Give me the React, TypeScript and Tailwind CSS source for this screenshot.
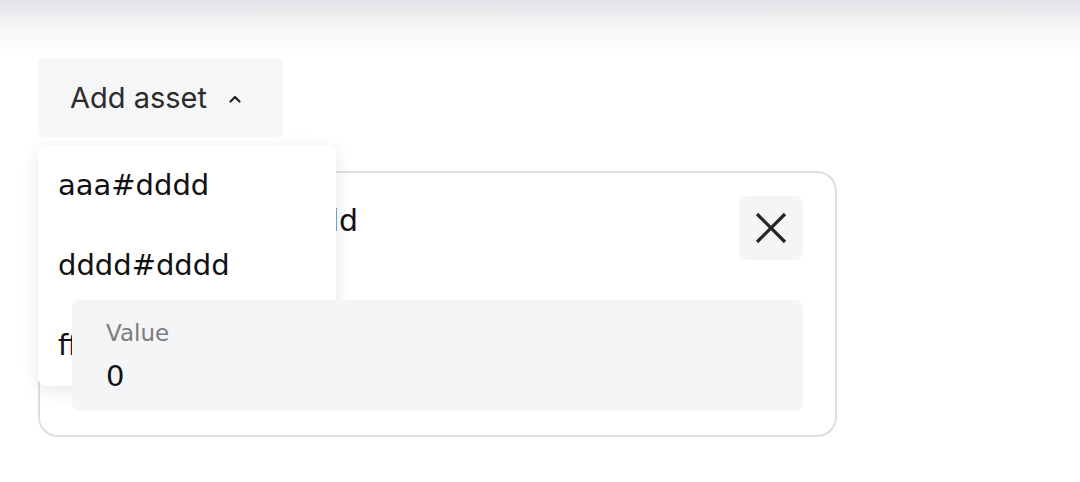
import { useState } from 'react';

const ASSETS = ['aaa#dddd', 'dddd#dddd', 'ffff#dddd'];

function ChevronUp() {
  return (
    <svg width="12" height="8" viewBox="0 0 12 8" fill="none" className="ml-[22px] mt-[2px]">
      <path d="M1.5 6.5L6 2l4.5 4.5" stroke="#222" strokeWidth="2.2" strokeLinecap="round" strokeLinejoin="round" />
    </svg>
  );
}

function CloseIcon() {
  return (
    <svg width="32" height="32" viewBox="0 0 32 32" fill="none">
      <path d="M2 2l28 28M30 2L2 30" stroke="#262626" strokeWidth="3.2" />
    </svg>
  );
}

export default function App() {
  const [open] = useState(true);

  return (
    <div className="min-h-screen bg-white font-['DejaVu_Sans',sans-serif] text-[#111]">
      <div className="h-[58px] bg-gradient-to-b from-[#e4e3e8] via-[#f7f7f8] to-white" />

      <div className="px-[38px]">
        <div className="relative inline-block">
          <button className="flex h-[79px] w-[245px] items-center rounded-md bg-[#f5f6f8] pl-8 font-['Inter',sans-serif] text-[29px] text-[#2b2b2b]">
            Add asset
            <ChevronUp />
          </button>

          {open && (
            <div className="absolute left-0 top-[88px] z-10 w-[298px] rounded-lg bg-white shadow-[0_4px_18px_rgba(0,0,0,0.10)]">
              {ASSETS.map((a) => (
                <div key={a} className="flex h-20 items-center px-5 text-[29px]">
                  {a}
                </div>
              ))}
            </div>
          )}
        </div>

        <div className="mt-[34px] w-[799px] rounded-[20px] border-2 border-[#dedede] bg-white px-8 pb-6 pt-[23px]">
          <div className="flex items-start justify-between">
            <span className="ml-[7px] mt-[2px] text-[30px]">Asset: dddd#dddd</span>
            <button className="flex h-16 w-16 items-center justify-center rounded-lg bg-[#f4f5f7]">
              <CloseIcon />
            </button>
          </div>

          <div className="relative z-20 mt-10 rounded-lg bg-[#f4f5f7] px-[34px] pb-[18px] pt-5">
            <div className="text-[23px] leading-[27px] text-[#7d7d7d]">Value</div>
            <div className="mt-3 text-[29px] leading-[34px]">0</div>
          </div>
        </div>
      </div>
    </div>
  );
}
